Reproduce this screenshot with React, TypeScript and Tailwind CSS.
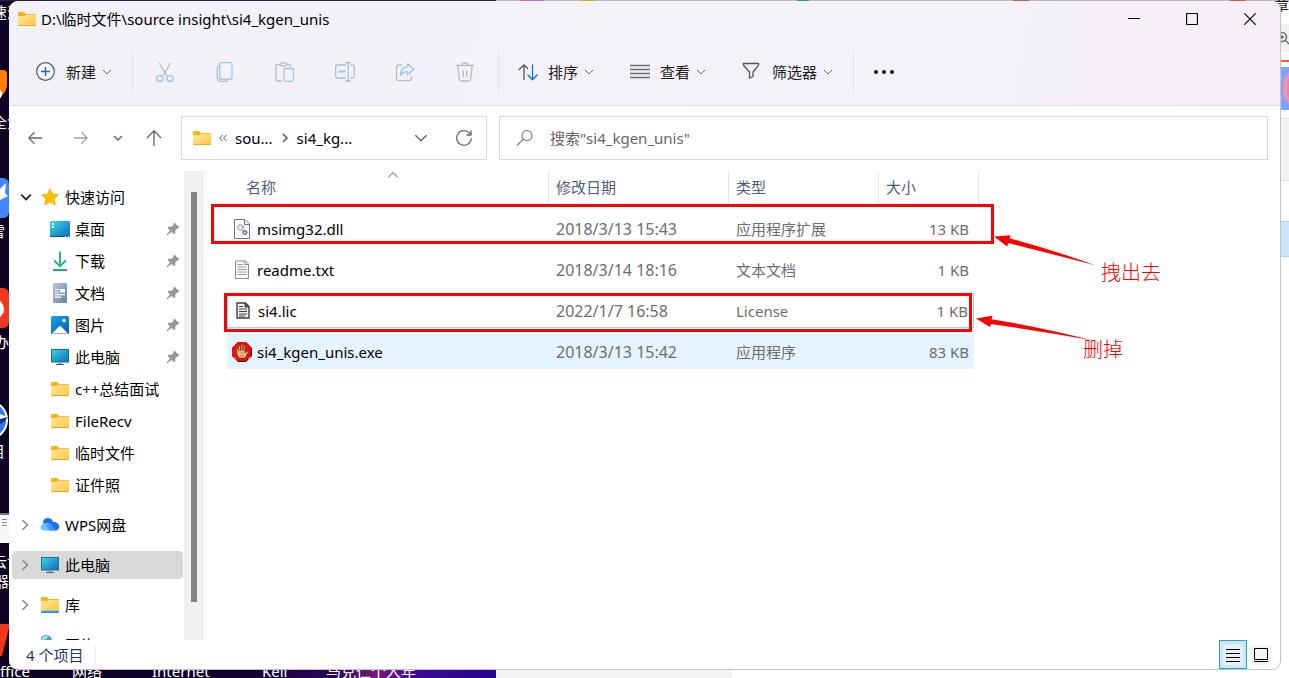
import React from "react";

type IconProps = { className?: string };

const Folder = ({ className = "" }: IconProps) => (
  <svg className={`h-4 w-[18px] shrink-0 ${className}`} viewBox="0 0 18 16" aria-hidden="true">
    <defs>
      <linearGradient id="folderFront" x1="0" y1="0" x2="1" y2="1">
        <stop offset="0" stopColor="#ffe8a0" />
        <stop offset="1" stopColor="#ffc83a" />
      </linearGradient>
    </defs>
    <path d="M0 2q0-1 1-1h5l2 2h9q1 0 1 1v9H0z" fill="#f6b21b" />
    <path d="M0 5h6.500l1.500-1.200h9q1 0 1 1V14q0 .8-.8.8H.8Q0 14.800 0 14z" fill="url(#folderFront)" />
    <path d="M0 14h18q0 1-.8 1H.8Q0 15 0 14z" fill="#e9a83a" />
  </svg>
);

const Library = () => (
  <svg className="h-4 w-[18px] shrink-0" viewBox="0 0 18 16" aria-hidden="true">
    <path d="M0 1q0-1 1-1h5l2 2h9q1 0 1 1v10H0z" fill="#f6b21b" />
    <path d="M0 4h6.500l1.500-1h10v10.500H0z" fill="url(#folderFront)" />
    <path d="M0 13.500h18v1q0 1-1 1H1q-1 0-1-1z" fill="#2fb4ea" />
    <path d="M0 14.800h18q0 1-1 1H1q-1 0-1-1z" fill="#1379c4" />
  </svg>
);

const Monitor = () => (
  <svg className="h-4 w-[18px] shrink-0" viewBox="0 0 18 16" aria-hidden="true">
    <defs>
      <linearGradient id="screen" x1="0" y1="0" x2="1" y2="1">
        <stop offset="0" stopColor="#38dbe2" />
        <stop offset="1" stopColor="#1266bd" />
      </linearGradient>
    </defs>
    <rect x="0.500" y="0.500" width="17" height="12.500" fill="url(#screen)" stroke="#1c6f98" />
    <path d="M7.500 13.500h3v1.500h-3z" fill="#8b98a5" />
    <path d="M5 15h8v1H5z" fill="#4d5966" />
  </svg>
);

const Desktop = () => (
  <svg className="h-4 w-5 shrink-0" viewBox="0 0 20 16" aria-hidden="true">
    <rect width="20" height="16" rx="1" fill="url(#screen)" />
    <path d="M2 2h2v2H2zM2 5h2v2H2z" fill="#fff" />
    <path d="M0 15q0 1 1 1h18q1 0 1-1z" fill="#0d4f9c" />
    <path d="M15 15h1v1h-1zM18 15h1v1h-1z" fill="#fff" />
  </svg>
);

const Download = () => (
  <svg className="h-5 w-4 shrink-0" viewBox="0 0 16 20" fill="none" aria-hidden="true">
    <path d="M8 .5v14M2.200 9.500l5.800 5.800 5.800-5.800" stroke="#1ab08c" strokeWidth="1.800" />
    <path d="M1 19h14" stroke="#17ad87" strokeWidth="2" />
  </svg>
);

const Documents = () => (
  <svg className="h-5 w-3.5 shrink-0" viewBox="0 0 14 20" aria-hidden="true">
    <defs>
      <linearGradient id="doc" x1="0" y1="0" x2="1" y2="1">
        <stop offset="0" stopColor="#b7cadd" />
        <stop offset="1" stopColor="#6482a3" />
      </linearGradient>
    </defs>
    <rect width="14" height="20" rx="1" fill="url(#doc)" />
    <path d="M2 6h4v1H2zM2 8.500h4v1H2zM7 6h5v3.500H7zM2 11h10v1.200H2zM2 13.500h6v1.200H2z" fill="#fff" />
  </svg>
);

const Pictures = () => (
  <svg className="size-[18px] shrink-0" viewBox="0 0 18 18" aria-hidden="true">
    <defs>
      <linearGradient id="pic" x1="0" y1="0" x2="0.600" y2="1">
        <stop offset="0" stopColor="#16a4e8" />
        <stop offset="1" stopColor="#0c64b8" />
      </linearGradient>
    </defs>
    <rect width="18" height="18" rx="1.500" fill="url(#pic)" />
    <path d="M1 17.500l7-7q1-.8 2 0l7 7z" fill="#fff" />
    <circle cx="13" cy="4.500" r="1.700" fill="#fff" />
  </svg>
);

const Star = () => (
  <svg className="size-[18px] shrink-0" viewBox="0 0 18 18" aria-hidden="true">
    <path
      d="M9 .8l2.500 5.300 5.900.8-4.300 4 1 5.900L9 14l-5.100 2.800 1-5.900-4.300-4 5.900-.8z"
      fill="#fdc10a"
      stroke="#f9b409"
      strokeWidth="1"
      strokeLinejoin="round"
    />
  </svg>
);

const Cloud = () => (
  <svg className="h-4 w-5 shrink-0" viewBox="0 0 20 16" aria-hidden="true">
    <path d="M3 6C3 2.500 5.500 1 8 1c2.600 0 4.400 1.400 5 4 3.400-.2 6.200 1.900 6.200 4.500 0 2.400-1.700 4-4.200 4L6 9z" fill="#1b6ff0" />
    <path d="M4.500 13.500C2 13.500.5 12.200.5 10.200.5 8 2.500 6.600 4.600 7c.8-1.400 4.400-1.600 6 .4l5 6.100z" fill="#6cc3fb" />
    <path d="M8.500 6.500c2 .2 5 4.500 7.500 7H9.500L6 8.500z" fill="#3c97f7" />
  </svg>
);

const Globe = () => (
  <svg className="h-5 w-[18px] shrink-0" viewBox="0 0 18 20" aria-hidden="true">
    <circle cx="5" cy="6" r="6" fill="#4f9fc9" />
    <path d="M1 3q3-3 6-2-1 4-6 4z" fill="#a9dff0" />
  </svg>
);

const Pin = () => (
  <svg className="size-3.5 shrink-0" viewBox="0 0 14 14" fill="#8e9aa4" aria-hidden="true">
    <path d="M8.500 .8l4.900 4.400-1 1.200-1.100-.1-2 2.300.1 2.700-1.400 1L5.300 9.900 1.200 13.500l-.7-.7L4 8.600 1.700 6l.9-1.400 2.800.2 2.100-2-.1-1.100z" />
  </svg>
);

type ChevronProps = { dir: "down" | "up" | "right"; className: string };
const Chevron = ({ dir, className }: ChevronProps) => {
  const d = dir === "down" ? "M1 3l4 4 4-4" : dir === "up" ? "M1 7l4-4 4 4" : "M3 1l4 4-4 4";
  return (
    <svg className={`shrink-0 ${className}`} viewBox="0 0 10 10" fill="none" stroke="currentColor" aria-hidden="true">
      <path d={d} vectorEffect="non-scaling-stroke" />
    </svg>
  );
};

const GREY = "#bcbac1";
const BLUE = "#94c6ee";

const ToolIcon = ({ children }: { children: React.ReactNode }) => (
  <svg className="size-5 shrink-0" viewBox="0 0 20 20" fill="none" strokeWidth="1.300" aria-hidden="true">
    {children}
  </svg>
);

const fileTools = [
  {
    label: "剪切",
    icon: (
      <ToolIcon>
        <path d="M4.200 1l7.600 13M15.600 1L8 14" stroke={GREY} />
        <circle cx="4.700" cy="16.400" r="3" stroke={BLUE} />
        <circle cx="15" cy="16.400" r="3" stroke={BLUE} />
      </ToolIcon>
    ),
  },
  {
    label: "复制",
    icon: (
      <ToolIcon>
        <path d="M4 3.500q-1.700.5-1.700 2.500v9.500q0 4 4 4h4q2 0 2.700-1.500" stroke={GREY} />
        <rect x="4.700" y="0.700" width="12.300" height="16.600" rx="2" stroke={BLUE} />
      </ToolIcon>
    ),
  },
  {
    label: "粘贴",
    icon: (
      <ToolIcon>
        <path d="M5.500 2.500h-3Q1 2.500 1 4v13.500Q1 19 2.500 19H7M11.500 2.500H14q1.500 0 1.500 1.500v1" stroke={GREY} />
        <rect x="5.500" y="0.800" width="6" height="3.200" rx="1.600" stroke={GREY} />
        <rect x="9" y="6.500" width="9.500" height="12.800" rx="1.500" stroke={BLUE} />
      </ToolIcon>
    ),
  },
  {
    label: "重命名",
    icon: (
      <ToolIcon>
        <path d="M11 3H2.500Q.7 3 .7 4.800v9.400Q.7 16 2.500 16H11M15.500 3h2q1.800 0 1.800 1.800v9.400q0 1.800-1.800 1.800h-2" stroke={GREY} />
        <path d="M3.500 9.500h7" stroke={BLUE} strokeWidth="2" />
        <path d="M10.500.7h5.500M10.500 19h5.500M13.300.7V19" stroke={BLUE} />
      </ToolIcon>
    ),
  },
  {
    label: "共享",
    icon: (
      <ToolIcon>
        <path d="M7 3H4Q1.500 3 1.500 5.500v10.700q0 2.500 2.500 2.500h10q2.500 0 2.500-2.500V14" stroke={GREY} />
        <path d="M12.500 1.800l6.300 5.400-6.300 5.500V9.800q-4.500-.5-7 3.400.3-7.500 7-8.500z" stroke={BLUE} strokeLinejoin="round" />
      </ToolIcon>
    ),
  },
  {
    label: "删除",
    icon: (
      <ToolIcon>
        <path d="M1 3.500h18M7 3.500Q7 1 10 1t3 2.500M2.800 3.500L4.300 17q.2 2 2 2h7.400q1.800 0 2-2l1.500-13.500M8.300 8v7M11.700 8v7" stroke={GREY} />
      </ToolIcon>
    ),
  },
];

const menuTools = [
  {
    label: "排序",
    icon: (
      <ToolIcon>
        <path d="M6 18V3M.8 8L6 2.800l4 4" stroke="#55535a" />
        <path d="M14.500 2.500V18M9.500 12.500l5 5.200 5-5.200" stroke="#0078d4" />
      </ToolIcon>
    ),
  },
  {
    label: "查看",
    icon: (
      <ToolIcon>
        <path d="M0 3.500h20M0 7.500h20M0 11.500h20M0 15.500h20" stroke="#6b696f" strokeWidth="1.300" />
      </ToolIcon>
    ),
  },
  {
    label: "筛选器",
    icon: (
      <ToolIcon>
        <path d="M1.500 1.500h15v1.800L11 10v4.500L7.500 16V10L1.500 3.300z" stroke="#55535a" strokeLinejoin="round" />
      </ToolIcon>
    ),
  },
];

const quickAccess = [
  { name: "桌面", icon: <Desktop />, pinned: true },
  { name: "下载", icon: <Download />, pinned: true },
  { name: "文档", icon: <Documents />, pinned: true },
  { name: "图片", icon: <Pictures />, pinned: true },
  { name: "此电脑", icon: <Monitor />, pinned: true },
  { name: "c++总结面试", icon: <Folder />, pinned: false },
  { name: "FileRecv", icon: <Folder />, pinned: false },
  { name: "临时文件", icon: <Folder />, pinned: false },
  { name: "证件照", icon: <Folder />, pinned: false },
];

const roots = [
  { name: "WPS网盘", icon: <Cloud />, selected: false, open: true },
  { name: "此电脑", icon: <Monitor />, selected: true, open: true },
  { name: "库", icon: <Library />, selected: false, open: true },
  { name: "网络", icon: <Globe />, selected: false, open: true },
];

const DllIcon = () => (
  <svg className="h-5 w-4" viewBox="0 0 16 20" fill="none" aria-hidden="true">
    <path d="M.5.5h10.500l4.500 4.500v14.500H.5z" fill="#fbfbfb" stroke="#77777a" />
    <path d="M10.500.5v5h5" stroke="#77777a" />
    <circle cx="6.500" cy="8.500" r="2.500" stroke="#9fb0bf" strokeWidth="2" strokeDasharray="1.500 .46" />
    <circle cx="10.800" cy="13.500" r="1.800" stroke="#55606b" strokeWidth="1.700" strokeDasharray="1.100 .31" />
  </svg>
);

const TxtIcon = () => (
  <svg className="h-5 w-4" viewBox="0 0 16 20" fill="none" aria-hidden="true">
    <path d="M1.500 1h10l3 3v14.500h-13z" fill="#fafafa" stroke="#8a8a8a" />
    <path d="M11 1v3.500h3.500" stroke="#8a8a8a" />
    <path d="M3.500 4.500h6M3.500 7h9M3.500 9.500h9M3.500 12h9M3.500 14.500h9" stroke="#9c9c9c" />
  </svg>
);

const LicIcon = () => (
  <svg className="h-5 w-4" viewBox="0 0 16 20" fill="none" aria-hidden="true">
    <path d="M2 2h8.500L14 5.500V17H2z" fill="#f3f3f3" stroke="#3e3e3e" strokeWidth="1.400" />
    <path d="M10 2v4h4" fill="#555" stroke="#3e3e3e" />
    <path d="M4 5.500h4M4 8h8M4 10.500h8M4 13h8M4 15h6" stroke="#3e3e3e" strokeWidth="1.200" />
  </svg>
);

const ExeIcon = () => (
  <svg className="size-5" viewBox="0 0 20 20" aria-hidden="true">
    <path d="M6 0h8l6 6v8l-6 6H6l-6-6V6z" fill="#5c0505" />
    <path d="M6 0h7.500L19 5.500v8L13.500 19H6l-6-5.500V6z" fill="#e81010" />
    <path
      d="M4.500 6.500q.8-.8 1.500 0L6.800 9V4q.8-.9 1.700 0v4.500h.5V2.600q.9-.8 1.800 0v5.900h.5V3.600q.8-.8 1.700 0v7.600l1.700-2q1.400-.3 1.500.6L13.200 16H7l-2-3.500z"
      fill="#f9c78f"
      stroke="#8f2b10"
      strokeWidth="0.800"
    />
    <path d="M7.500 11h4M8 13.500h4" stroke="#c4622a" strokeWidth="0.800" />
    <path d="M2 15l3 3M16 17l3-3" stroke="#fff" strokeWidth="0.800" strokeDasharray="1 1" />
  </svg>
);

const focused = "[&>td]:border-y [&>td:first-child]:border-l [&>td:last-child]:border-r [&>td]:border-[#99d1ff]";

const files = [
  { name: "msimg32.dll", date: "2018/3/13 15:43", type: "应用程序扩展", size: "13 KB", icon: <DllIcon />, state: "" },
  { name: "readme.txt", date: "2018/3/14 18:16", type: "文本文档", size: "1 KB", icon: <TxtIcon />, state: "" },
  { name: "si4.lic", date: "2022/1/7 16:58", type: "License", size: "1 KB", icon: <LicIcon />, state: focused },
  { name: "si4_kgen_unis.exe", date: "2018/3/13 15:42", type: "应用程序", size: "83 KB", icon: <ExeIcon />, state: "[&>td]:bg-[#e5f3ff]" },
];

function Wallpaper() {
  return (
    <div className="absolute inset-0 overflow-hidden bg-white text-white" aria-hidden="true">
      <div className="absolute inset-y-0 left-0 w-[496px] bg-[linear-gradient(90deg,#0d0221_0%,#10022e_50%,#2a0560_68%,#7c1a78_76%,#3b0a94_84%,#24068c_100%)]" />
      <div className="absolute left-0 top-0 h-px w-[496px] bg-[#2a2140]" />
      <div className="absolute left-[496px] right-0 top-0 h-px bg-[#bdb9bd]" />
      <div className="absolute left-[520px] top-0 h-px w-6 bg-[#c46fd0]" />
      <div className="absolute left-[581px] top-0 h-px w-3.5 bg-[#b9b213]" />
      <div className="absolute left-[797px] top-0 h-px w-3 bg-[#2f9c6c]" />
      <div className="absolute left-[1013px] top-0 h-px w-4 bg-[#d2593f]" />
      <div className="absolute left-[1230px] top-0 h-px w-4 bg-[#d2593f]" />
      <div className="absolute bottom-0 left-[496px] h-2 w-[236px] bg-[#f3f3f5]" />

      <div className="absolute -left-6 top-[70px] h-[30px] w-[31px] rounded-tr-sm rounded-br-2xl bg-[#ff8000]" />
      <div className="absolute -left-4 top-[88px] h-3 w-[18px] rounded-full bg-white" />
      <div className="absolute -left-8 top-[178px] h-10 w-[41px] rounded-md bg-[#3f86ff]" />
      <svg className="absolute left-0 top-[180px] h-8 w-2" viewBox="0 0 8 32" fill="#fff">
        <path d="M0 9L6 3 5 13 8 16 0 20z" />
      </svg>
      <div className="absolute -left-8 top-[288px] h-10 w-[41px] rounded-md bg-[#f4371f]" />
      <div className="absolute -left-5 top-[299px] h-5 w-6 rounded-full bg-white" />
      <div className="absolute -left-8 top-[400px] size-10 rounded-full border-2 border-white bg-[#2f7be6]" />
      <svg className="absolute left-0 top-[412px] h-3 w-2" viewBox="0 0 8 12">
        <path d="M0 6l8-1-4 5-4 2z" fill="#0b2f9b" />
        <path d="M0 2l8 3-8 2z" fill="#fff" />
      </svg>
      <div className="absolute left-0 top-[513px] h-[30px] w-3 border-t-2 border-[#77757d] bg-[#f7f7f7]" />
      <svg className="absolute left-0 top-[517px] h-3 w-2" viewBox="0 0 8 12" stroke="#8a8a8a">
        <path d="M2 2.500h5M2 5.500h5M2 8.500h5" />
      </svg>
      <svg className="absolute left-0 top-[622px] h-9 w-2.5" viewBox="0 0 10 36">
        <path d="M0 2h10L2 34H0z" fill="#f5341c" />
      </svg>

      <span className="absolute -left-2 top-0">速浏</span>
      <span className="absolute -left-2 top-[110px]">全免</span>
      <span className="absolute -left-2.5 top-[219px]">雷</span>
      <span className="absolute -left-1.5 top-[330px]">办公</span>
      <span className="absolute -left-2.5 top-[439px]">目</span>
      <span className="absolute -left-2 top-[549px]">云记</span>
      <span className="absolute -left-1.5 top-[569px]">器</span>
      <div className="absolute top-[659px] flex whitespace-nowrap">
        <span className="w-[72px]">ffice</span>
        <span className="w-20">网络</span>
        <span className="w-[110px]">Internet</span>
        <span className="w-16">Keil</span>
        <span>马克仁个人年</span>
      </div>

      <div className="absolute right-0 top-6 h-7 w-2.5 bg-[#f1f1f1]" />
      <svg className="absolute right-0 top-[30px] h-4 w-3" viewBox="0 0 12 16" fill="none" stroke="#6b6b6b">
        <circle cx="5" cy="7" r="4.500" strokeWidth="1.500" />
        <path d="M3 7h4M5 5v4M8 10l4 4" strokeWidth="1.300" />
      </svg>
      <span className="absolute right-0 -top-2 text-[#222]">章</span>
      <div className="absolute right-0 top-[60px] h-0.5 w-2.5 bg-[#ff5533]" />
      <div className="absolute right-0 top-[67px] h-[43px] w-2.5 overflow-hidden bg-[#7ba4ff] pl-1 pt-0.5">
        <div className="h-[38px] w-8 rounded-full border-4 border-[#f58bc0] bg-[#d88f96]" />
      </div>
      <div className="absolute right-0 top-[118px] h-[63px] w-2.5 border-y border-[#e2e2e2] bg-[#f3f3f3]" />
      <div className="absolute right-0 top-[221px] h-9 w-2.5 border-y border-[#a6d2f5] bg-[#cce8ff]" />
    </div>
  );
}

function TitleBar() {
  return (
    <header className="flex h-9 items-center pl-[9px] text-black">
      <Folder />
      <h1 className="ml-[5px] flex-1 whitespace-nowrap">D:\临时文件\source insight\si4_kgen_unis</h1>
      <div className="flex h-full pr-px">
        <button type="button" aria-label="最小化" className="grid w-[58px] place-items-center">
          <svg className="size-3" viewBox="0 0 12 12" stroke="#000">
            <path d="M0 5.500h12" />
          </svg>
        </button>
        <button type="button" aria-label="最大化" className="grid w-[58px] place-items-center">
          <svg className="size-3" viewBox="0 0 12 12" fill="none" stroke="#000">
            <rect x="0.500" y="0.500" width="11" height="11" rx="1" strokeWidth="1.200" />
          </svg>
        </button>
        <button type="button" aria-label="关闭" className="grid w-[58px] place-items-center">
          <svg className="size-3" viewBox="0 0 12 12" stroke="#000">
            <path d="M.3.300l11.400 11.400M11.700.300L.3 11.700" strokeWidth="1.200" />
          </svg>
        </button>
      </div>
    </header>
  );
}

const Divider = () => <div className="h-10 w-px bg-[#e2dfe6]" />;

function Toolbar() {
  return (
    <div role="toolbar" className="flex h-[69px] items-center border-b border-[#dfdce3] pl-[27px] pt-px text-[#1b1b1b]">
      <button type="button" className="flex items-center">
        <svg className="size-5" viewBox="0 0 20 20" fill="none" aria-hidden="true">
          <circle cx="9.500" cy="9.500" r="8.800" fill="#faf9fc" stroke="#55535a" strokeWidth="1.200" />
          <path d="M5 9.500h9M9.500 5v9" stroke="#0a6cbd" strokeWidth="1.300" />
        </svg>
        <span className="ml-2.5">新建</span>
        <Chevron dir="down" className="ml-1.5 size-2.5 text-[#66646b]" />
      </button>
      <div className="ml-5 flex items-center">
        <Divider />
        <div className="ml-0.5 mr-[3px] flex">
          {fileTools.map((t) => (
            <button key={t.label} type="button" aria-label={t.label} disabled className="grid h-10 w-[60px] place-items-center">
              {t.icon}
            </button>
          ))}
        </div>
        <Divider />
      </div>
      <div className="ml-[19px] flex items-center gap-9">
        {menuTools.map((t) => (
          <button key={t.label} type="button" className="flex items-center">
            {t.icon}
            <span className="ml-2.5">{t.label}</span>
            <Chevron dir="down" className="ml-1.5 size-2.5 text-[#66646b]" />
          </button>
        ))}
      </div>
      <div className="ml-5 flex items-center gap-5">
        <Divider />
        <button type="button" aria-label="查看更多">
          <svg className="size-5" viewBox="0 0 20 20" fill="#111" aria-hidden="true">
            <circle cx="2" cy="10" r="2" />
            <circle cx="10" cy="10" r="2" />
            <circle cx="18" cy="10" r="2" />
          </svg>
        </button>
      </div>
    </div>
  );
}

function AddressRow() {
  return (
    <div className="flex items-center pl-[19px] pr-3 pt-2.5">
      <nav aria-label="导航" className="flex w-[153px] items-center text-[#6a6a6a]">
        <button type="button" aria-label="后退" className="w-[46px]">
          <svg className="size-3.5" viewBox="0 0 14 14" fill="none" stroke="currentColor" strokeWidth="1.300">
            <path d="M14 7H.8M6.500 1.200L.8 7l5.700 5.800" />
          </svg>
        </button>
        <button type="button" aria-label="前进" className="w-[39px] text-[#a5a5a5]">
          <svg className="size-3.5" viewBox="0 0 14 14" fill="none" stroke="currentColor" strokeWidth="1.300">
            <path d="M0 7h13.200M7.500 1.200L13.200 7l-5.700 5.800" />
          </svg>
        </button>
        <button type="button" aria-label="最近浏览的位置" className="w-[33px]">
          <Chevron dir="down" className="size-2.5 stroke-[1.5] text-[#666]" />
        </button>
        <button type="button" aria-label="向上">
          <svg className="size-4" viewBox="0 0 16 16" fill="none" stroke="currentColor" strokeWidth="1.400">
            <path d="M8 16V.8M1 8l7-7.200L15 8" />
          </svg>
        </button>
      </nav>
      <div className="flex h-11 w-[306px] items-center border border-[#d9d9d9] bg-white pl-[11px] pr-3.5 text-black">
        <Folder />
        <svg className="ml-[7px] size-2.5 shrink-0" viewBox="0 0 10 10" fill="none" stroke="#555" aria-hidden="true">
          <path d="M4.500 2L1.500 5l3 3M8.500 2l-3 3 3 3" />
        </svg>
        <a href="#source" className="ml-[7px]">sou...</a>
        <Chevron dir="right" className="mx-[7px] size-2.5 stroke-[1.5] text-[#555]" />
        <a href="#unis" className="flex-1">si4_kg...</a>
        <button type="button" aria-label="历史位置" className="mr-7">
          <Chevron dir="down" className="size-3.5 stroke-[1.5] text-[#666]" />
        </button>
        <button type="button" aria-label="刷新">
          <svg className="size-4" viewBox="0 0 16 16" fill="none" stroke="#6a6a6a" strokeWidth="1.300">
            <path d="M15.300 8.300A7.300 7.300 0 1 1 13.500 3.200L15 5M15 .5V5h-4.500" />
          </svg>
        </button>
      </div>
      <label className="ml-3 flex h-11 flex-1 items-center border border-[#d9d9d9] bg-white pl-4">
        <svg className="size-[18px]" viewBox="0 0 18 18" fill="none" stroke="#7a7a7a" strokeWidth="1.100" aria-hidden="true">
          <circle cx="11" cy="6.500" r="5" />
          <path d="M7.500 10L1 16.500" />
        </svg>
        <input
          type="search"
          aria-label="搜索"
          placeholder={'搜索"si4_kgen_unis"'}
          className="ml-4 min-w-0 flex-1 bg-transparent outline-none placeholder:text-[#666]"
        />
      </label>
    </div>
  );
}

function Sidebar() {
  return (
    <div className="mt-[11px] flex min-h-0 shrink-0 overflow-hidden border-r border-[#f3f3f3] pr-0.5 text-black">
      <nav aria-label="文件夹" className="w-[175px] pl-[3px] pr-px pt-2.5">
        <a href="#quick" className="flex h-8 items-center pl-2">
          <Chevron dir="down" className="size-3 stroke-[1.8] text-[#222]" />
          <span className="ml-[9px] mr-1.5"><Star /></span>
          快速访问
        </a>
        <ul>
          {quickAccess.map((q) => (
            <li key={q.name}>
              <a href="#item" className="flex h-8 items-center pl-[37px] pr-[3px]">
                <span className="mr-1 grid w-[22px] place-items-center">{q.icon}</span>
                <span className="flex-1">{q.name}</span>
                {q.pinned && <Pin />}
              </a>
            </li>
          ))}
        </ul>
        <ul className="pt-1">
          {roots.map((r) => (
            <li key={r.name} className="flex h-10 items-center">
              <a href="#root" className={`flex h-7 flex-1 items-center rounded-sm pl-[7px] ${r.selected ? "bg-[#d9d9d9]" : ""}`}>
                <Chevron dir="right" className="size-3 stroke-[1.6] text-[#8a8a8a]" />
                <span className="ml-2 mr-1 grid w-[22px] place-items-center">{r.icon}</span>
                {r.name}
              </a>
            </li>
          ))}
        </ul>
      </nav>
      <div className="w-5 bg-[#f0f0f0] px-[7px] pt-[21px]">
        <div className="h-[410px] bg-[#858585]" />
      </div>
    </div>
  );
}

function Annotations() {
  return (
    <>
      <div className="pointer-events-none absolute left-1 top-[44px] h-10 w-[783px] border-[3px] border-[#ff0000]" />
      <div className="pointer-events-none absolute left-[17px] top-[133px] h-[39px] w-[748px] border-[3px] border-[#ff0000]" />
      <svg className="pointer-events-none absolute left-[763px] top-[70px] h-[120px] w-[140px]" viewBox="970 230 140 120" fill="#ff0000" aria-hidden="true">
        <path d="M994 236.500L1010.500 235.200 1009.500 238.200Q1050 249 1096 265.500 1050 253.500 1008.500 243L1007 246.500z" />
        <path d="M976 318.500L992.500 315.800 991.500 319.200Q1040 327 1092 340.300 1040 331 991 324L990 327z" />
      </svg>
      <span className="absolute left-[894px] top-[99px] text-xl leading-7 font-light text-[#ff0000]">拽出去</span>
      <span className="absolute left-[876px] top-[176px] text-xl leading-7 font-light text-[#ff0000]">删掉</span>
    </>
  );
}

function FileList() {
  const head = "border-r border-[#e5e5e5] pb-0.5 text-left font-normal";
  return (
    <main className="relative min-w-0 flex-1 overflow-hidden pl-5 pt-[5px]">
      <table className="w-[752px] table-fixed border-separate border-spacing-x-0 border-spacing-y-[6px]">
        <colgroup>
          <col className="w-[322px]" />
          <col className="w-[180px]" />
          <col className="w-[150px]" />
          <col className="w-[95px]" />
          <col className="w-[5px]" />
        </colgroup>
        <thead className="text-[#4c607a]">
          <tr className="h-[34px]">
            <th className={`${head} relative pl-[19px]`}>
              名称
              <Chevron dir="up" className="absolute -top-0.5 left-40 size-3 text-[#555]" />
            </th>
            <th className={`${head} pl-[7px]`}>修改日期</th>
            <th className={`${head} pl-[7px]`}>类型</th>
            <th colSpan={2} className={`${head} pl-[7px]`}>大小</th>
          </tr>
        </thead>
        <tbody className="text-[#6d6d6d]">
          {files.map((f) => (
            <FileRow key={f.name} file={f} />
          ))}
        </tbody>
      </table>
      <Annotations />
    </main>
  );
}

function FileRow({ file }: { file: (typeof files)[number] }) {
  return (
    <tr className={`h-[35px] ${file.state}`}>
      <td className="p-0">
        <a href="#file" className="flex items-center text-black">
          <span className="ml-1 mr-1 grid w-[22px] place-items-center">{file.icon}</span>
          {file.name}
        </a>
      </td>
      <td className="py-0 pl-[7px] pr-0 text-base leading-6">{file.date}</td>
      <td className="py-0 pl-[7px] pr-0">{file.type}</td>
      <td className="py-0 pl-0 pr-[5px] text-right">{file.size}</td>
    </tr>
  );
}

function StatusBar() {
  return (
    <footer className="flex h-[29px] items-center pl-[17px] text-[#1e395b]">
      <span className="border-r border-[#eeeeee] pr-3 leading-5">4 个项目</span>
      <div className="ml-auto flex h-full items-center gap-1 pr-[9px]">
        <button type="button" aria-label="详细信息" className="grid h-full w-7 place-items-center border border-[#26a0da] bg-[#cce8f6]">
          <svg className="size-5" viewBox="0 0 20 20" aria-hidden="true">
            <rect width="20" height="20" rx="2" fill="#e6eff5" />
            <path d="M3 4.500h14M3 8.500h14M3 12.500h14M3 16.500h14" stroke="#000" />
          </svg>
        </button>
        <button type="button" aria-label="大图标" className="grid w-5 place-items-center">
          <svg className="size-5" viewBox="0 0 20 20" fill="none" stroke="#000" aria-hidden="true">
            <rect width="20" height="20" rx="2" fill="#f3f3f3" stroke="none" />
            <path d="M3.500 3.500h13v11h-13zM3 16.500h14" />
          </svg>
        </button>
      </div>
    </footer>
  );
}

export default function App() {
  return (
    <div className="relative flex h-screen pb-2 pl-[9px] pr-2 pt-px font-['Noto_Sans','Noto_Sans_CJK_SC',sans-serif] text-[15px] leading-6">
      <Wallpaper />
      <div className="relative flex min-w-0 flex-1 flex-col overflow-hidden rounded-[9px] border-b border-r border-[#c4c4c6] bg-white">
        <div className="bg-[linear-gradient(100deg,#f3f1f8_0%,#f4f1f8_75%,#f6eef7_100%)]">
          <TitleBar />
          <Toolbar />
        </div>
        <AddressRow />
        <div className="flex min-h-0 flex-1">
          <Sidebar />
          <FileList />
        </div>
        <StatusBar />
      </div>
    </div>
  );
}
